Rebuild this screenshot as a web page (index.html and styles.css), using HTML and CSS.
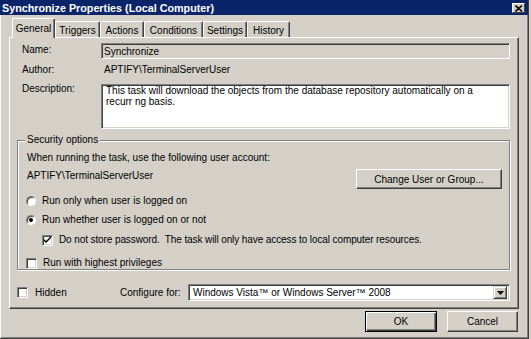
FILE: index.html
```html
<!DOCTYPE html>
<html lang="en">
<head>
  <meta charset="UTF-8">
  <title>Synchronize Properties (Local Computer)</title>
  <link rel="stylesheet" href="styles.css">
</head>
<body>
  <div class="window">
    <div class="titlebar">
      <span class="title">Synchronize Properties (Local Computer)</span>
      <span class="close">
        <svg width="8" height="7" viewBox="0 0 8 7"><path d="M0.5 0.5 L7 6.5 M7 0.5 L0.5 6.5" stroke="#000" stroke-width="1.6"/></svg>
      </span>
    </div>

    <div class="client">
      <div class="tabs">
        <div class="tab active tab-general">General</div>
        <div class="tab tab-triggers">Triggers</div>
        <div class="tab tab-actions">Actions</div>
        <div class="tab tab-conditions">Conditions</div>
        <div class="tab tab-settings">Settings</div>
        <div class="tab tab-history">History</div>
      </div>

      <div class="panel">
        <div class="row name-row">
          <span class="label">Name:</span>
          <div class="field readonly">Synchronize</div>
        </div>
        <div class="row author-row">
          <span class="label">Author:</span>
          <span class="value">APTIFY\TerminalServerUser</span>
        </div>
        <div class="row desc-row">
          <span class="label">Description:</span>
          <div class="field memo">This task will download the objects from the database repository automatically on a<br>recurr ng basis.</div>
        </div>

        <fieldset class="group">
          <legend>Security options</legend>
          <div class="line">When running the task, use the following user account:</div>
          <div class="account-row">
            <span class="line">APTIFY\TerminalServerUser</span>
            <button class="btn change">Change User or Group...</button>
          </div>
          <div class="opt radio-1">
            <span class="radio"></span>
            <span>Run only when user is logged on</span>
          </div>
          <div class="opt radio-2">
            <span class="radio on"></span>
            <span>Run whether user is logged on or not</span>
          </div>
          <div class="opt sub check-1">
            <span class="check on">
              <svg width="7" height="7" viewBox="0 0 7 7"><path d="M0 2 L0 4 L2 6 L7 1 L7 -1 L2 4 Z" fill="#000"/></svg>
            </span>
            <span class="keep">Do not store password.  The task will only have access to local computer resources.</span>
          </div>
          <div class="opt check-2">
            <span class="check"></span>
            <span>Run with highest privileges</span>
          </div>
        </fieldset>

        <div class="bottom-row">
          <div class="hidden-opt">
            <span class="check"></span>
            <span>Hidden</span>
          </div>
          <span class="config-label">Configure for:</span>
          <div class="field select">
            <span class="select-text">Windows Vista™ or Windows Server™ 2008</span>
            <span class="arrow">
              <svg width="7" height="4" viewBox="0 0 7 4"><path d="M0 0 H7 L3.5 4 Z" fill="#000"/></svg>
            </span>
          </div>
        </div>
      </div>

      <div class="buttons">
        <button class="btn default">OK</button>
        <button class="btn">Cancel</button>
      </div>
    </div>
  </div>
</body>
</html>
```

FILE: styles.css
```css
body {
  margin: 0;
  background-color: #d4d0c8;
  font-family: "Liberation Sans", Arial, sans-serif;
  font-size: 10px;
  color: #000;
}
.window {
  width: 529px;
  height: 339px;
  box-sizing: border-box;
  border-right: 1px solid #404040;
  border-bottom: 1px solid #404040;
  box-shadow: inset 1px 0 #fff, inset -1px -1px #808080;
}
.titlebar {
  height: 15px;
  background-color: #0a246a;
  color: #fff;
  display: flex;
  align-items: center;
  justify-content: space-between;
  padding: 0 3px 0 2px;
}
.title {
  font-weight: bold;
  font-size: 10.75px;
}
.close {
  width: 13px;
  height: 10px;
  box-sizing: border-box;
  background-color: #d4d0c8;
  border: 1px solid;
  border-color: #fff #404040 #404040 #fff;
  display: flex;
  align-items: center;
  justify-content: center;
  margin-top: 1px;
}
.client {
  padding: 0 9px 0 9px;
}

/* tabs */
.tabs {
  display: flex;
  align-items: flex-end;
  height: 18px;
  margin: 4px 0 0 3px;
  position: relative;
  z-index: 1;
}
.tab {
  height: 16px;
  line-height: 17px;
  text-align: center;
  border: 1px solid;
  border-color: #fff #404040 transparent #fff;
  border-bottom: none;
  border-radius: 2px 2px 0 0;
  box-shadow: inset -1px 0 #808080;
  box-sizing: border-box;
  white-space: nowrap;
}
.tab.active {
  height: 20px;
  line-height: 19px;
  margin-bottom: -1px;
  background-color: #d4d0c8;
}
.tab-general { width: 43px; }
.tab-triggers { width: 45px; }
.tab-actions { width: 44px; }
.tab-conditions { width: 59px; }
.tab-settings { width: 44px; }
.tab-history { width: 43px; }

/* tab page */
.panel {
  height: 272px;
  box-sizing: border-box;
  border: 1px solid;
  border-color: #fff #404040 #404040 #fff;
  box-shadow: inset -1px -1px #808080;
  padding: 5px 8px 0 7px;
}
.row {
  display: flex;
  align-items: flex-start;
}
.label {
  width: 79px;
  padding-left: 5px;
  flex-shrink: 0;
}
.field {
  border: 1px solid;
  border-color: #808080 #fff #fff #808080;
  box-shadow: inset 1px 1px #404040, inset -1px -1px #d4d0c8;
  background-color: #fff;
  box-sizing: border-box;
}
.name-row {
  height: 16px;
  line-height: 16px;
}
.name-row .label {
  line-height: 14px;
}
.field.readonly {
  flex: 1;
  height: 16px;
  line-height: 15px;
  padding: 0 2px;
  background-color: #d4d0c8;
}
.author-row {
  height: 21px;
  line-height: 21px;
}
.value {
  padding-left: 3px;
}
.desc-row {
  margin-top: 4px;
}
.desc-row .label {
  line-height: 10px;
}
.field.memo {
  flex: 1;
  height: 45px;
  line-height: 11px;
  padding: 0 4px;
}

/* security options */
.group {
  margin: 5px 0 0 0;
  padding: 0 7px 0 9px;
  border: 1px solid #808080;
  box-shadow: 1px 1px #fff, inset 1px 1px #fff;
  height: 136px;
  box-sizing: border-box;
}
.group legend {
  padding: 0 2px;
  margin-left: -2px;
  line-height: 12px;
  background-color: #d4d0c8;
}
.line {
  line-height: 12px;
}
.group > .line {
  margin-top: 6px;
}
.account-row {
  display: flex;
  justify-content: space-between;
  align-items: flex-start;
  margin-top: 5px;
}
.account-row .line {
  margin-top: 1px;
}
.opt {
  display: flex;
  align-items: center;
  gap: 6px;
  height: 12px;
  line-height: 12px;
  margin-left: -1px;
}
.radio-1 {
  margin-top: 6px;
}
.radio-2 {
  margin-top: 7px;
}
.check-1 {
  margin-top: 8px;
}
.check-2 {
  margin-top: 11px;
}
.opt.sub {
  margin-left: 15px;
}
.keep {
  white-space: pre;
  letter-spacing: -0.1px;
}
.radio {
  width: 10px;
  height: 10px;
  box-sizing: border-box;
  border-radius: 50%;
  background-color: #fff;
  border: 1px solid;
  border-color: #808080 #fff #fff #808080;
  box-shadow: inset 1px 1px #404040;
  display: flex;
  align-items: center;
  justify-content: center;
  flex-shrink: 0;
}
.radio.on::after {
  content: "";
  width: 4px;
  height: 4px;
  border-radius: 50%;
  background-color: #000;
}
.check {
  width: 11px;
  height: 11px;
  box-sizing: border-box;
  background-color: #fff;
  border: 1px solid;
  border-color: #808080 #fff #fff #808080;
  box-shadow: inset 1px 1px #404040, inset -1px -1px #d4d0c8;
  display: flex;
  align-items: center;
  justify-content: center;
  flex-shrink: 0;
}

/* buttons */
.btn {
  font-family: inherit;
  font-size: 10px;
  color: #000;
  background-color: #d4d0c8;
  border: 1px solid;
  border-color: #fff #404040 #404040 #fff;
  box-shadow: inset -1px -1px #808080;
  border-radius: 0;
  padding: 0;
  margin: 0;
  height: 21px;
}
.btn.change {
  width: 146px;
  height: 20px;
}
.btn.default {
  border-color: #000;
  box-shadow: inset 1px 1px #fff, inset -1px -1px #404040, inset -2px -2px #808080;
}

/* bottom of tab page */
.bottom-row {
  display: flex;
  align-items: center;
  height: 17px;
  margin-top: 14px;
}
.hidden-opt {
  width: 103px;
  display: flex;
  align-items: center;
  gap: 7px;
}
.config-label {
  width: 68px;
}
.field.select {
  flex: 1;
  height: 17px;
  display: flex;
  align-items: center;
  justify-content: space-between;
  padding: 0 2px 0 4px;
}
.arrow {
  width: 14px;
  height: 13px;
  box-sizing: border-box;
  background-color: #d4d0c8;
  border: 1px solid;
  border-color: #d4d0c8 #404040 #404040 #d4d0c8;
  box-shadow: inset 1px 1px #fff, inset -1px -1px #808080;
  display: flex;
  align-items: center;
  justify-content: center;
}

.buttons {
  display: flex;
  justify-content: flex-end;
  gap: 10px;
  margin-top: 2px;
  padding-right: 1px;
}
.buttons .btn {
  width: 72px;
}
.buttons .btn + .btn {
  width: 71px;
}
```
